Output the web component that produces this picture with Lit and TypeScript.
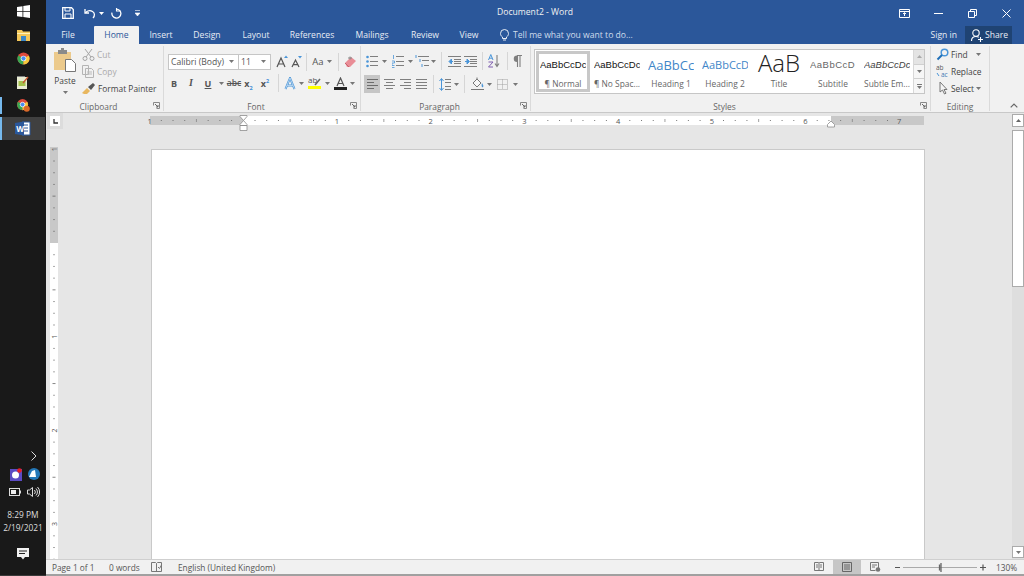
import { LitElement, html, css, svg } from "lit";
import { customElement } from "lit/decorators.js";

const ic = (w: number, h: number, c: unknown) =>
  html`<svg width=${w} height=${h} viewBox="0 0 ${w} ${h}" fill="none">${c}</svg>`;

const G = "#7f7f7f";
const B = "#4a95d8";
const caret = ic(5, 3, svg`<path d="M0 0h5L2.500 3z" fill="#777"/>`);
const wcaret = ic(5, 3, svg`<path d="M0 0h5L2.500 3z" fill="#fff"/>`);

const lines = (ys: number[], x1: number, x2: number, c = G) =>
  ys.map((y) => svg`<path d="M${x1} ${y}.5H${x2}" stroke=${c}/>`);

const I: Record<string, unknown> = {
  growA: ic(13, 13, svg`<path d="M1 12L5 3l4 9M2.700 9h4.600" stroke="#555" stroke-width="1.200"/><path d="M8 3l2-2.500L12 3z" fill=${B}/>`),
  shrinkA: ic(13, 13, svg`<path d="M2 12l3.500-7L9 12M3.300 9.600h4.400" stroke="#555" stroke-width="1.200"/><path d="M8 1h4l-2 2.500z" fill=${B}/>`),
  eraser: ic(13, 14, svg`<path d="M1 8l6-6 5 4-6 6H3z" fill="#e98d96"/><path d="M6 1.500v3M4 3l4 0" stroke="#888"/><path d="M1 8l4 4" stroke="#c9606c"/>`),
  bullets: ic(12, 13, svg`<circle cx="1.500" cy="2" r="1.300" fill=${B}/><circle cx="1.500" cy="6.500" r="1.300" fill=${B}/><circle cx="1.500" cy="11" r="1.300" fill=${B}/>${lines([1, 6, 10], 4, 12)}`),
  numbers: ic(12, 13, svg`<path d="M1.500 0v4M0 6h2.500v2H0v2.500h2.500M0 12.500h2.500" stroke=${B} stroke-width=".8"/>${lines([1, 6, 10], 4, 12)}`),
  multi: ic(14, 13, svg`<path d="M1 0v3M5 4v3M7 9v3" stroke=${B}/><path d="M3 1.500h11M7 5.500h7M9 10.500h5" stroke=${G}/>`),
  outdent: ic(13, 11, svg`${lines([0, 10], 0, 13)}${lines([3, 5, 7], 6, 13)}<path d="M5 5.500H2M3.500 3L1 5.500 3.500 8z" stroke=${B} fill=${B}/>`),
  indent: ic(13, 11, svg`${lines([0, 10], 0, 13)}${lines([3, 5, 7], 6, 13)}<path d="M1 5.500h3M3 3l2.500 2.500L3 8z" stroke=${B} fill=${B}/>`),
  sort: ic(12, 14, svg`<path d="M.5 6L2.800 .5 5 6M1.300 4.200h3" stroke=${B}/><path d="M.5 8H5L.5 13H5" stroke="#7f5fb0"/><path d="M9 1v11M7 9.500l2 3 2-3" stroke=${G} stroke-width="1.100"/>`),
  pil: ic(9, 12, svg`<path d="M4.500 12V.5M7 12V.5M9 .5H4" stroke=${G} stroke-width="1.100"/><path d="M4 .5a3 3 0 0 0 0 6.500h1V.5z" fill=${G}/>`),
  left: ic(11, 10, svg`<path d="M0 .5h11M0 3.500h7M0 6.500h11M0 9.500h7" stroke="#6c6c6c"/>`),
  center: ic(11, 10, svg`<path d="M0 .5h11M2 3.500h7M0 6.500h11M2 9.500h7" stroke=${G}/>`),
  right: ic(11, 10, svg`<path d="M0 .5h11M4 3.500h7M0 6.500h11M4 9.500h7" stroke=${G}/>`),
  just: ic(11, 10, svg`<path d="M0 .5h11M0 3.500h11M0 6.500h11M0 9.500h11" stroke=${G}/>`),
  spacing: ic(12, 13, svg`<path d="M2.500 1v11M.5 3l2-2.500 2 2.500M.5 10l2 2.500 2-2.500" stroke=${B} stroke-width="1"/>${lines([1, 4, 8, 11], 6, 12)}`),
  shade: ic(13, 14, svg`<path d="M2 6l4-4 4 4-4 4z" fill="#f6f6f6" stroke="#777"/><path d="M6 2V.5" stroke="#777"/><path d="M11 6c1 2 2 3 1 4s-2-1-1-4z" fill=${B}/><path d="M0 12.500h13" stroke="#777"/>`),
  borders: ic(11, 11, svg`<path d="M.5 .5h10v10H.5zM5.500 .5v10M.5 5.500h10" stroke="#a0a0a0" stroke-dasharray="1 1"/>`),
  color: ic(13, 13, svg`<path d="M3 9l3.500-8L10 9M4.200 6.500h4.600" stroke="#555" stroke-width="1.200"/><rect y="10" width="13" height="3" fill="#222"/>`),
  texteff: ic(12, 13, svg`<path d="M1.500 12L6 1l4.500 11M3.200 8.500h5.600" stroke=${B} stroke-width="2"/><path d="M1.500 12L6 1l4.500 11M3.200 8.500h5.600" stroke="#dbe9f6" stroke-width=".7"/>`),
  hi: ic(13, 14, svg`<text x="0" y="7" font-size="8" fill="#555" font-family="Open Sans">ab</text><path d="M7 9l5-6" stroke="#666" stroke-width="1.500"/><rect y="10" width="13" height="3" fill="#ffff00"/>`),
  cut: ic(13, 13, svg`<path d="M3 1l6 8M10 1L4 9" stroke="#a5a5a5"/><circle cx="3" cy="10.500" r="2" stroke="#a5a5a5"/><circle cx="10" cy="10.500" r="2" stroke="#a5a5a5"/>`),
  copy: ic(13, 13, svg`<path d="M.5 .5h6v9h-6z M3.500 3.500h6l2 2v7h-8z" stroke="#b4b4b4" fill="#f1f1f1"/><path d="M5 7h5M5 9h5" stroke="#bbb"/>`),
  brush: ic(14, 13, svg`<path d="M0 11l5-5 3 3-3 3H2z" fill="#e8b75f"/><path d="M6 5l3 3 4-5-2-2z" fill="#555"/>`),
  find: ic(13, 13, svg`<circle cx="8.500" cy="4.500" r="3.300" stroke=${B} stroke-width="1.500"/><path d="M6 7L1.500 11.500" stroke="#1f6fb8" stroke-width="2"/>`),
  replace: ic(13, 14, svg`<text x="0" y="6" font-size="6.500" fill="#555" font-family="Open Sans">ab</text><text x="5" y="13" font-size="6.500" fill="#3f78b5" font-family="Open Sans">ac</text><path d="M1 9l2 3" stroke=${B}/>`),
  select: ic(13, 14, svg`<path d="M4 1v10l2.500-2 2 4 1.500-.8-2-3.700h3z" stroke="#777" fill="#f4f4f4"/>`),
};

const B1 = (t: string, cls = "") => html`<span class="g ${cls}">${t}</span>`;
type Cell = [number, unknown, string?];
const P = (w: number) => [w, ""] as Cell;
const C = (w: number): Cell => [w, caret];
const SEP = (w: number): Cell => [w, html`<i class="vsep"></i>`];

const fontRow2: Cell[] = [
  [12, B1("B", "b")], P(4),
  [14, B1("I", "it")], P(3),
  [14, B1("U", "un")], P(1), C(10),
  [16, B1("abc", "st")],
  [13, html`<span class="g b">x<sub class="bsub">2</sub></span>`], P(3),
  [14, html`<span class="g b">x<sup class="bsub">2</sup></span>`],
  SEP(12),
  [12, I.texteff], C(10), P(1), [14, I.hi], C(12), [14, I.color], C(10),
];
const paraRow1: Cell[] = [
  [16, I.bullets], C(9), [17, I.numbers], C(8), [16, I.multi], C(6),
  SEP(10), [16, I.outdent], [16, I.indent], SEP(8), [16, I.sort], SEP(10), [10, I.pil],
];
const paraRow2: Cell[] = [
  [16, I.left, "on"], P(1), [16, I.center], [16, I.right], [16, I.just], SEP(8),
  [15, I.spacing], C(8), SEP(9), [16, I.shade], C(9), [16, I.borders], C(10),
];

const row = (cells: Cell[]) =>
  cells.map(([w, c, k]) => html`<span class="cell ${k ?? ""}" style="width:${w}px">${c}</span>`);

const styles = [
  ["AaBbCcDc", "¶ Normal", "normal sel"],
  ["AaBbCcDc", "¶ No Spac...", "normal"],
  ["AaBbCc", "Heading 1", "h1"],
  ["AaBbCcD", "Heading 2", "h2"],
  ["AaB", "Title", "title"],
  ["AaBbCcD", "Subtitle", "sub"],
  ["AaBbCcDc", "Subtle Em...", "em"],
];

const tabs = ["Insert", "Design", "Layout", "References", "Mailings", "Review", "View"];

const launcher = ic(7, 7, svg`<path d="M.5 .5h6v6M.5 .5v3M3.500 6.500h3" stroke="#888"/><path d="M2 2l3 3M3 5h2V3" stroke="#666"/>`);

/* Rulers are drawn on a free canvas: tick coordinates are the content. */
const hRuler = () => {
  const o = 93.3, s = 93.7, ticks: unknown[] = [];
  for (let k = -8; k <= 56; k++) {
    const x = o + (k * s) / 8;
    if (x < 2 || x > 772) continue;
    if (k % 8 === 0) continue;
    if (k % 4 === 0) ticks.push(svg`<path d="M${x} 3v3" stroke="#888" stroke-width=".8"/>`);
    else ticks.push(svg`<rect x=${x - 0.5} y="4" width="1" height="1" fill="#777"/>`);
  }
  const nums = [[-1, 1], [1, 1], [2, 2], [3, 3], [4, 4], [5, 5], [6, 6], [7, 7]].map(
    ([k, n]) => svg`<text x=${o + k * s} y="7.800" text-anchor="middle" font-size="7.500" font-family="Open Sans" fill="#555">${n}</text>`
  );
  return html`<svg class="hruler" width="776" height="18" viewBox="0 0 776 18">
    <g transform="translate(0 2)">
      <rect width="93" height="9" fill="#c8c8c8"/>
      <rect x="93" width="588" height="9" fill="#fff"/>
      <rect x="681" width="93" height="9" fill="#c8c8c8"/>
      ${ticks}${nums}
    </g>
    <path d="M90 3h7v1l-3.500 4L90 4zM93.500 8l3.500 4v1h-7v-1zM90 13h7v5h-7z" fill="#fff" stroke="#8d8d8d" stroke-width=".8" transform="translate(0 -1.500)"/>
    <path d="M681 7l3.500 3.500V13h-7v-2.500z" fill="#fff" stroke="#8d8d8d" stroke-width=".8"/>
  </svg>`;
};

const vRuler = () => {
  const o = 113, s = 93.7, ticks: unknown[] = [];
  for (let k = -7; k <= 28; k++) {
    const y = o + (k * s) / 8;
    if (k % 8 === 0) continue;
    if (k % 4 === 0) ticks.push(svg`<path d="M2.500 ${y}h3" stroke="#666" stroke-width=".8"/>`);
    else ticks.push(svg`<rect x="3.500" y=${y - 0.5} width="1" height="1" fill="#555"/>`);
  }
  const nums = [[-1, 1], [1, 1], [2, 2], [3, 3]].map(
    ([k, n]) => svg`<text transform="translate(6.500 ${o + k * s}) rotate(-90)" text-anchor="middle" font-size="7" font-family="Open Sans" fill="#555">${n}</text>`
  );
  return html`<svg class="vruler" width="8" height="429" viewBox="0 0 8 429">
    <rect y="17" width="8" height="96" fill="#c8c8c8"/>
    <rect y="113" width="8" height="316" fill="#fff"/>
    ${ticks}${nums}
  </svg>`;
};

const chrome = html`<svg width="13" height="13" viewBox="0 0 14 14">
  <circle cx="7" cy="7" r="6.500" fill="#de4a3c"/>
  <path d="M7 7L1.400 3.700A6.500 6.500 0 0 0 7 13.500z" fill="#39a853"/>
  <path d="M7 7l5.600-3.300A6.500 6.500 0 0 1 7 13.500z" fill="#f6c93e"/>
  <circle cx="7" cy="7" r="3" fill="#fff"/><circle cx="7" cy="7" r="2.300" fill="#4a8df0"/></svg>`;

@customElement("app-root")
export class AppRoot extends LitElement {
  static styles = css`
    :host { display: block; width: 1024px; height: 576px; overflow: hidden; font-family: "Open Sans", sans-serif; font-size: 8.400px; color: #555; }
    .app { display: flex; height: 576px; }
    .taskbar { width: 46px; flex: none; background: #191919; display: flex; flex-direction: column; align-items: stretch; color: #e4e4e4; border-bottom: 1px solid #3a3a3a; box-sizing: border-box; }
    .tb { height: 23.400px; display: flex; align-items: center; justify-content: center; position: relative; }
    .tb.run::before { content: ""; position: absolute; left: 0; top: 3px; bottom: 3px; width: 2px; background: #76b9ed; }
    .tb.act { background: #404040; width: 45px; }
    .tb.act::before { top: 0; bottom: 0; }
    .tray { margin-top: auto; display: flex; flex-direction: column; align-items: center; padding-bottom: 15px; }
    .tray .chev { align-self: flex-end; margin: 0 9px 4px 0; flex: none; }
    .tr2 { display: flex; gap: 6px; align-items: center; height: 18px; padding-left: 3px; }
    .clock { margin-top: 7px; text-align: center; font-size: 8.400px; line-height: 13px; color: #ddd; white-space: nowrap; }
    .note { margin-top: 14px; }
    .main { flex: 1; min-width: 0; display: flex; flex-direction: column; background: #e6e6e6; }

    .blue { background: #2b579a; color: #fff; height: 44px; flex: none; display: flex; flex-direction: column; }
    .qat { height: 26px; display: flex; align-items: center; padding: 0 1px 0 16px; position: relative; }
    .qat .q { display: flex; align-items: center; }
    .doc { position: absolute; left: 450px; top: 6px; width: 78px; text-align: center; font-size: 8.600px; color: #f2f2f2; white-space: nowrap; }
    .wc { margin-left: auto; display: flex; align-items: center; }
    .wc span { width: 34px; display: flex; justify-content: center; }
    .tabs { height: 18px; display: flex; align-items: stretch; font-size: 8.600px; color: #e8edf5; }
    .tab { display: flex; align-items: center; justify-content: center; white-space: nowrap; }
    .tab.file { width: 44px; margin-right: 4px; }
    .tab.home { width: 45px; background: #f1f1f1; color: #2b579a; border-radius: 1px 1px 0 0; }
    .t0 { width: 44px; } .t1 { width: 48px; } .t2 { width: 50px; } .t3 { width: 62px; } .t4 { width: 58px; } .t5 { width: 48px; } .t6 { width: 40px; }
    .tell { margin-left: 11px; display: flex; align-items: center; gap: 4px; color: #cfdcec; white-space: nowrap; }
    .sign { margin-left: auto; margin-right: 8px; display: flex; align-items: center; white-space: nowrap; }
    .share { width: 47px; margin-right: 12px; background: #1f4373; display: flex; align-items: center; gap: 2px; padding-left: 6px; box-sizing: border-box; }

    .ribbon { height: 69px; flex: none; box-sizing: border-box; background: #f1f1f1; border-bottom: 1px solid #c8c8c8; display: flex; position: relative; }
    .grp { display: flex; flex-direction: column; border-right: 1px solid #dadada; margin: 2px 0 1px; box-sizing: border-box; position: relative; }
    .gbody { height: 49px; flex: none; box-sizing: border-box; }
    .glabel { text-align: center; height: 12px; line-height: 14px; margin-top: 5px; padding-right: 12px; color: #666; }
    .edit .glabel { padding-right: 0; }
    .lau { position: absolute; right: 3px; bottom: 2px; line-height: 0; }
    .clip { width: 118px; }
    .font { width: 197px; }
    .para { width: 170px; }
    .sty { width: 400px; }
    .edit { width: 59px; }
    .clipb { display: flex; padding: 2px 0 0 7px; }
    .paste { width: 24px; display: flex; flex-direction: column; align-items: center; color: #444; margin-right: 5px; }
    .paste span { margin-top: 2px; line-height: 11px; }
    .paste .cr { margin-top: 5px; line-height: 0; }
    .col { display: flex; flex-direction: column; gap: 3px; }
    .li { height: 14px; display: flex; align-items: center; gap: 2px; white-space: nowrap; color: #444; }
    .li.off { color: #aaa; }
    .row { display: flex; align-items: center; }
    .cell { display: flex; align-items: center; justify-content: center; flex: none; height: 18px; line-height: 0; }
    .cell.on { background: #c6c6c6; }
    .fontb { padding: 7px 0 0 4px; }
    .f1 { height: 17px; }
    .f2 { margin-top: 4px; height: 18px; }
    .box { height: 16px; background: #fff; border: 1px solid #c6c6c6; box-sizing: border-box; display: flex; align-items: center; justify-content: space-between; padding: 0 4px 0 2px; white-space: nowrap; font-size: 8.600px; }
    .box.a { width: 71px; } .box.b { width: 33px; margin-right: 3px; margin-left: -1px; }
    .vsep { display: block; width: 1px; height: 18px; background: #d6d6d6; }
    .g { font-size: 9px; line-height: 1; color: #555; }
    .g.b { font-weight: 700; } .g.it { font-style: italic; font-family: "Liberation Serif"; font-weight: 700; font-size: 10px; }
    .g.un { text-decoration: underline; font-weight: 700; } .g.st { font-size: 8.500px; font-weight: 600; text-decoration: line-through; }
    .aa { width: 26px; gap: 3px; line-height: 1.200; font-size: 9.500px; color: #555; }
    .bsub { font-size: 5.500px; color: #3f8fd6; line-height: 0; }
    .parab { padding: 6px 0 0 3px; }
    .parab .row + .row { margin-top: 5px; }
    .parab .row { height: 18px; }
    .gal { margin: 3px 0 0 3px; height: 45px; width: 391px; display: flex; background: #fff; border: 1px solid #c6c6c6; box-sizing: border-box; }
    .items { flex: 1; display: flex; min-width: 0; padding: 1px 0 0 1px; }
    .gi { width: 54px; flex: none; box-sizing: border-box; height: 41px; display: flex; flex-direction: column; align-items: center; overflow: hidden; border: 2px solid transparent; }
    .gi.sel { border-color: #c8c8c8; box-shadow: inset 0 0 0 1px #c8c8c8; }
    .sm { height: 24px; width: 46px; overflow: hidden; display: flex; align-items: center; justify-content: center; white-space: nowrap; color: #111; line-height: 24px; font-family: "Liberation Sans"; flex: none; }
    .lb { white-space: nowrap; color: #666; line-height: 13px; }
    .normal .sm { font-size: 9.500px; justify-content: flex-start; }
    .h1 .sm { font-size: 13px; color: #3f86c8; font-family: "Open Sans"; justify-content: flex-start; }
    .h2 .sm { font-size: 11px; color: #3f86c8; font-family: "Open Sans"; justify-content: flex-start; }
    .title .sm { font-size: 24px; color: #222; font-family: "Open Sans"; font-weight: 300; width: 46px; align-items: flex-start; line-height: 20px; }
    .sub .sm { font-size: 9.500px; color: #666; letter-spacing: .5px; justify-content: flex-start; }
    .em .sm { font-size: 9.500px; color: #444; font-style: italic; justify-content: flex-start; }
    .scr { width: 11px; flex: none; display: flex; flex-direction: column; border-left: 1px solid #d8d8d8; box-sizing: border-box; }
    .scr span { flex: 1; display: flex; align-items: center; justify-content: center; line-height: 0; border-bottom: 1px solid #d0d0d0; background: #f6f6f6; }
    .scr span:first-child { background: #e4e4e4; }
    .scr span:last-child { border-bottom: 0; flex-direction: column; gap: 1px; }
    .editb { padding: 2px 0 0 5px; }
    .editb .li { gap: 2px; }
    .findcr { margin-left: 6px; line-height: 0; }
    .collapse { position: absolute; right: 6px; bottom: 4px; line-height: 0; }

    .rrow { height: 17px; flex: none; display: flex; }
    .tabsel { width: 16px; height: 16px; margin-left: 1px; background: #dcdcdc; display: flex; align-items: center; justify-content: center; }
    .tabsel i { width: 10px; height: 10px; background: #fff; display: flex; align-items: center; justify-content: center; }
    .hruler { margin-left: 87px; margin-top: 1px; overflow: visible; flex: none; }
    .sbtn { width: 12px; box-sizing: border-box; background: #fff; border: 1px solid #ababab; display: flex; align-items: center; justify-content: center; line-height: 0; flex: none; }
    .rrow .sbtn { margin-left: auto; height: 13px; margin-top: 1px; }

    .body { flex: 1; min-height: 0; display: flex; overflow: hidden; }
    .vruler { margin: 0 0 0 4px; flex: none; }
    .page { width: 774px; margin: 19px 0 0 93px; background: #fff; border: 1px solid #c9c9c9; border-bottom: 0; box-sizing: border-box; flex: none; }
    .sb { margin-left: auto; width: 12px; background: #dedede; display: flex; flex-direction: column; flex: none; }
    .thumb { height: 157px; width: 12px; box-sizing: border-box; background: #fff; border: 1px solid #ababab; flex: none; }
    .sb .sbtn { margin-top: auto; height: 12px; margin-bottom: 1px; }

    .status { height: 17px; flex: none; box-sizing: border-box; background: #f1f1f1; border-top: 1px solid #cfcfcf; border-bottom: 2px solid #a0a0a0; display: flex; align-items: center; color: #555; white-space: nowrap; font-size: 8.300px; }
    .status .pg { margin-left: 6px; width: 57px; }
    .status .wd { width: 42px; }
    .status .pf { width: 27px; line-height: 0; }
    .vw { display: flex; align-items: center; margin-left: auto; }
    .vw span { display: flex; width: 28px; height: 14px; align-items: center; justify-content: center; line-height: 0; }
    .vw span.on { background: #c6c6c6; }
    .zoomr { display: flex; align-items: center; margin-left: 6px; }
    .zoomr b { font-weight: 400; margin-left: 5px; margin-right: 7px; width: 24px; text-align: right; }
  `;

  render() {
    const pasteIcon = html`<svg width="24" height="25" viewBox="0 0 24 25">
      <rect x="1" y="4" width="17" height="18" fill="#ecca8c" />
      <rect x="5" y="2" width="9" height="4" fill="#8a8a8a" /><rect x="8" y="0" width="3" height="3" fill="#8a8a8a"/>
      <path d="M12.500 11.500h6l4 4v8h-10z" fill="#fff" stroke="#777" />
    </svg>`;
    const word = html`<svg width="16" height="15" viewBox="0 0 16 15">
      <path d="M7 1h8v13H7z" fill="#fff" stroke="#2b579a" /><path d="M9 4h4M9 7h4M9 10h4" stroke="#2b579a" />
      <path d="M0 2l9-1.500v14L0 13z" fill="#2b579a" />
      <text x="1.300" y="10.500" font-size="8" font-weight="700" fill="#fff" font-family="Open Sans">W</text>
    </svg>`;
    return html`<div class="app">
      <aside class="taskbar">
        <div class="tb"><svg width="13" height="13" viewBox="0 0 13 13"><path d="M0 2l5.500-.8v5H0zM6.300 1L13 0v6.200H6.300zM0 7h5.500v5L0 11.200zM6.300 7H13v6l-6.700-1z" fill="#fff"/></svg></div>
        <div class="tb"><svg width="13" height="11" viewBox="0 0 13 11"><path d="M0 0h5l1 1.500h7V11H0z" fill="#f3c75a"/><path d="M0 3h13v1H0z" fill="#fff2b8"/><rect x="4" y="6" width="5" height="5" fill="#3b87c8"/></svg></div>
        <div class="tb">${chrome}</div>
        <div class="tb"><svg width="12" height="14" viewBox="0 0 12 14"><rect y="2" width="10" height="12" fill="#e9ecd2"/><rect x="1.500" y="6" width="7" height="5" fill="#a4c24d"/><path d="M1 2V1M3 2V1M5 2V1M7 2V1" stroke="#eee"/><path d="M6 8l5-6" stroke="#c9552f" stroke-width="1.300"/></svg></div>
        <div class="tb run">
          <svg width="13" height="13" viewBox="0 0 14 14"><circle cx="6" cy="6" r="6" fill="#de4a3c"/><path d="M6 6L1 3A6 6 0 0 0 6 12z" fill="#39a853"/><path d="M6 6l5-3A6 6 0 0 1 6 12z" fill="#f6c93e"/><circle cx="6" cy="6" r="2.500" fill="#4a8df0" stroke="#fff" stroke-width=".8"/><circle cx="10.500" cy="10.500" r="3.300" fill="#d9692a"/></svg>
        </div>
        <div class="tb run act">${word}</div>
        <div class="tray">
          <svg class="chev" width="6" height="10" viewBox="0 0 6 10"><path d="M.5 .5L5 5 .5 9.500" stroke="#ddd" fill="none"/></svg>
          <div class="tr2">
            <svg width="12" height="13" viewBox="0 0 12 13"><rect y="1" width="12" height="12" fill="#5b4bc4"/><circle cx="5.500" cy="7" r="3.500" fill="#fff"/><circle cx="9.500" cy="2.500" r="2.300" fill="#e81e25"/></svg>
            <svg width="12" height="12" viewBox="0 0 12 12"><circle cx="6" cy="6" r="6" fill="#2478b8"/><path d="M1 9l3-6 3-1 1 7z" fill="#fff"/></svg>
          </div>
          <div class="tr2">
            <svg width="12" height="8" viewBox="0 0 12 8"><rect x=".5" y=".5" width="10" height="7" stroke="#ddd" fill="none"/><rect x="2" y="2" width="5" height="4" fill="#eee"/><rect x="11" y="2.500" width="1" height="3" fill="#ddd"/></svg>
            <svg width="13" height="10" viewBox="0 0 13 10"><path d="M.5 3h2l3-2.500v9l-3-2.500h-2z" stroke="#ddd" fill="none"/><path d="M7.500 3a3 3 0 0 1 0 4M9 1.500a5 5 0 0 1 0 7M10.500 0a7 7 0 0 1 0 10" stroke="#ddd" fill="none"/></svg>
          </div>
          <div class="clock">8:29 PM<br />2/19/2021</div>
          <svg class="note" width="12" height="12" viewBox="0 0 12 12"><path d="M0 0h12v9H8l-2 2.500L4 9H0z" fill="#f2f2f2"/><path d="M2 3h8M2 5.500h6" stroke="#222"/></svg>
        </div>
      </aside>

      <div class="main">
        <header class="blue">
          <div class="qat">
            <span class="q"><svg width="12" height="12" viewBox="0 0 12 12"><path d="M.7 .7h8.800l1.800 1.800v8.800H.7z" stroke="#fff" stroke-width="1.300" fill="none"/><path d="M3 1v3h5V1M3 11V7h6v4" stroke="#fff" fill="none"/></svg></span>
            <span class="q" style="margin-left:10px"><svg width="13" height="11" viewBox="0 0 13 11"><path d="M1 1v4h4" stroke="#fff" stroke-width="1.300" fill="none"/><path d="M1.500 5C3 2.800 6 2 8.500 3.500c2.500 1.500 2.500 4.500.5 6.500" stroke="#fff" stroke-width="1.300" fill="none"/></svg></span>
            <span class="q" style="margin-left:2px">${wcaret}</span>
            <span class="q" style="margin-left:7px"><svg width="11" height="11" viewBox="0 0 11 11"><path d="M7.500 1.500A4.500 4.500 0 1 1 2 2.500" stroke="#fff" stroke-width="1.300" fill="none" transform="rotate(-30 5.500 5.500)"/><path d="M6.500 0v4h4" stroke="#fff" stroke-width="1.100" fill="none" transform="translate(-1 -1)"/></svg></span>
            <span class="q" style="margin-left:13px"><svg width="5" height="6" viewBox="0 0 5 6"><path d="M0 .5h5M0 3h5L2.500 6z" stroke="#fff" stroke-width=".6" fill="#fff"/></svg></span>
            <span class="doc">Document2 - Word</span>
            <div class="wc">
              <span><svg width="11" height="9" viewBox="0 0 11 9"><path d="M.5 .5h10v8H.5zM.5 2.500h10" stroke="#fff" fill="none"/><path d="M5.500 7V4M4 5l1.500-1.500L7 5" stroke="#fff" fill="none"/></svg></span>
              <span><svg width="9" height="9" viewBox="0 0 9 9"><path d="M0 4.500h9" stroke="#fff"/></svg></span>
              <span><svg width="9" height="9" viewBox="0 0 9 9"><path d="M.5 2.500h6v6h-6zM2.500 2.500v-2h6v6h-2" stroke="#fff" fill="none"/></svg></span>
              <span><svg width="9" height="9" viewBox="0 0 9 9"><path d="M.5 .5l8 8M8.500 .5l-8 8" stroke="#fff"/></svg></span>
            </div>
          </div>
          <nav class="tabs">
            <span class="tab file">File</span>
            <span class="tab home">Home</span>
            ${tabs.map((t, i) => html`<span class="tab t${i}">${t}</span>`)}
            <span class="tell"><svg width="9" height="12" viewBox="0 0 9 12"><path d="M2.500 8C1 7 .5 5.800.5 4.500a4 4 0 0 1 8 0C8.500 5.800 8 7 6.500 8v1.500h-4zM3 11h3" stroke="#e8edf5" fill="none"/></svg>Tell me what you want to do...</span>
            <span class="sign">Sign in</span>
            <span class="share"><svg width="12" height="13" viewBox="0 0 12 13"><circle cx="5" cy="4" r="3.200" stroke="#fff" stroke-width="1.100" fill="none"/><path d="M.5 12c0-3 2-4.500 4.500-4.500 1 0 2 .3 2.800.8M9.500 8v5M7 10.500h5" stroke="#fff" stroke-width="1.100" fill="none"/></svg>Share</span>
          </nav>
        </header>

        <section class="ribbon">
          <div class="grp clip">
            <div class="gbody clipb">
              <div class="paste">${pasteIcon}<span>Paste</span><i class="cr">${caret}</i></div>
              <div class="col">
                <div class="li off">${I.cut}Cut</div>
                <div class="li off">${I.copy}Copy</div>
                <div class="li">${I.brush}Format Painter</div>
              </div>
            </div>
            <div class="glabel">Clipboard</div><span class="lau">${launcher}</span>
          </div>

          <div class="grp font">
            <div class="gbody fontb">
              <div class="row f1">
                <span class="box a">Calibri (Body)${caret}</span>
                <span class="box b">11${caret}</span>
                <span class="cell" style="width:16px">${I.growA}</span>
                <span class="cell" style="width:13px">${I.shrinkA}</span>
                <span class="cell" style="width:6px"><i class="vsep"></i></span>
                <span class="cell aa">Aa${caret}</span>
                <span class="cell" style="width:7px"><i class="vsep"></i></span>
                <span class="cell" style="width:16px">${I.eraser}</span>
              </div>
              <div class="row f2">${row(fontRow2)}</div>
            </div>
            <div class="glabel">Font</div><span class="lau">${launcher}</span>
          </div>

          <div class="grp para">
            <div class="gbody parab">
              <div class="row">${row(paraRow1)}</div>
              <div class="row">${row(paraRow2)}</div>
            </div>
            <div class="glabel">Paragraph</div><span class="lau">${launcher}</span>
          </div>

          <div class="grp sty">
            <div class="gbody">
              <div class="gal">
                <div class="items">
                  ${styles.map(([s, l, k]) => html`<div class="gi ${k}"><span class="sm">${s}</span><span class="lb">${l}</span></div>`)}
                </div>
                <div class="scr">
                  <span>${ic(5, 3, svg`<path d="M0 3h5L2.500 0z" fill="#aaa"/>`)}</span>
                  <span>${caret}</span>
                  <span>${ic(5, 1, svg`<path d="M0 .5h5" stroke="#777"/>`)}${caret}</span>
                </div>
              </div>
            </div>
            <div class="glabel">Styles</div><span class="lau">${launcher}</span>
          </div>

          <div class="grp edit">
            <div class="gbody editb col">
              <div class="li">${I.find}<span>Find</span><span class="findcr">${caret}</span></div>
              <div class="li">${I.replace}Replace</div>
              <div class="li">${I.select}<span>Select</span>${caret}</div>
            </div>
            <div class="glabel">Editing</div>
          </div>
          <span class="collapse"><svg width="8" height="5" viewBox="0 0 8 5"><path d="M.7 4.300L4 1l3.300 3.300" stroke="#666" stroke-width="1.200" fill="none"/></svg></span>
        </section>

        <div class="rrow">
          <span class="tabsel"><i><svg width="5" height="5" viewBox="0 0 5 5"><path d="M1 0v4h4" stroke="#333" stroke-width="1.300" fill="none"/></svg></i></span>
          ${hRuler()}
          <span class="sbtn">${ic(5, 3, svg`<path d="M0 3h5L2.500 0z" fill="#666"/>`)}</span>
        </div>
        <div class="body">
          ${vRuler()}
          <div class="page"></div>
          <div class="sb"><div class="thumb"></div><span class="sbtn">${caret}</span></div>
        </div>

        <footer class="status">
          <span class="pg">Page 1 of 1</span>
          <span class="wd">0 words</span>
          <span class="pf"><svg width="11" height="10" viewBox="0 0 11 10"><path d="M.5 .5h4l1 1 1-1h4v9H.5zM5.500 1.500v8" stroke="#777" fill="none"/><path d="M7 5l1.500 1.500L10.500 3" stroke="#777" fill="none"/></svg></span>
          <span>English (United Kingdom)</span>
          <div class="vw">
            <span><svg width="10" height="10" viewBox="0 0 10 10"><path d="M.5 .5h4l.5 .5.5-.5h4v8h-9zM5 1v8M2 3h2M2 5h2M6 3h2M6 5h2" stroke="#777" fill="none"/></svg></span>
            <span class="on"><svg width="10" height="10" viewBox="0 0 10 10"><path d="M.5 .5h9v9h-9zM2 3h6M2 5h6M2 7h6" stroke="#666" fill="none"/></svg></span>
            <span><svg width="11" height="10" viewBox="0 0 11 10"><path d="M.5 .5h8v6M.5 .5v8h5M2 3h5M2 5h3" stroke="#777" fill="none"/><circle cx="8" cy="7.500" r="2.300" fill="#777"/></svg></span>
          </div>
          <div class="zoomr">
            <svg width="93" height="11" viewBox="0 0 93 11"><path d="M0 5.500h5M85 5.500h6M88 2.500v6" stroke="#555" stroke-width="1.200"/><path d="M8 5.500h74" stroke="#aaa"/><path d="M46 1v9M44.500 2.500v6" stroke="#666" stroke-width="1.300"/></svg>
            <b>130%</b>
          </div>
        </footer>
      </div>
    </div>`;
  }
}
